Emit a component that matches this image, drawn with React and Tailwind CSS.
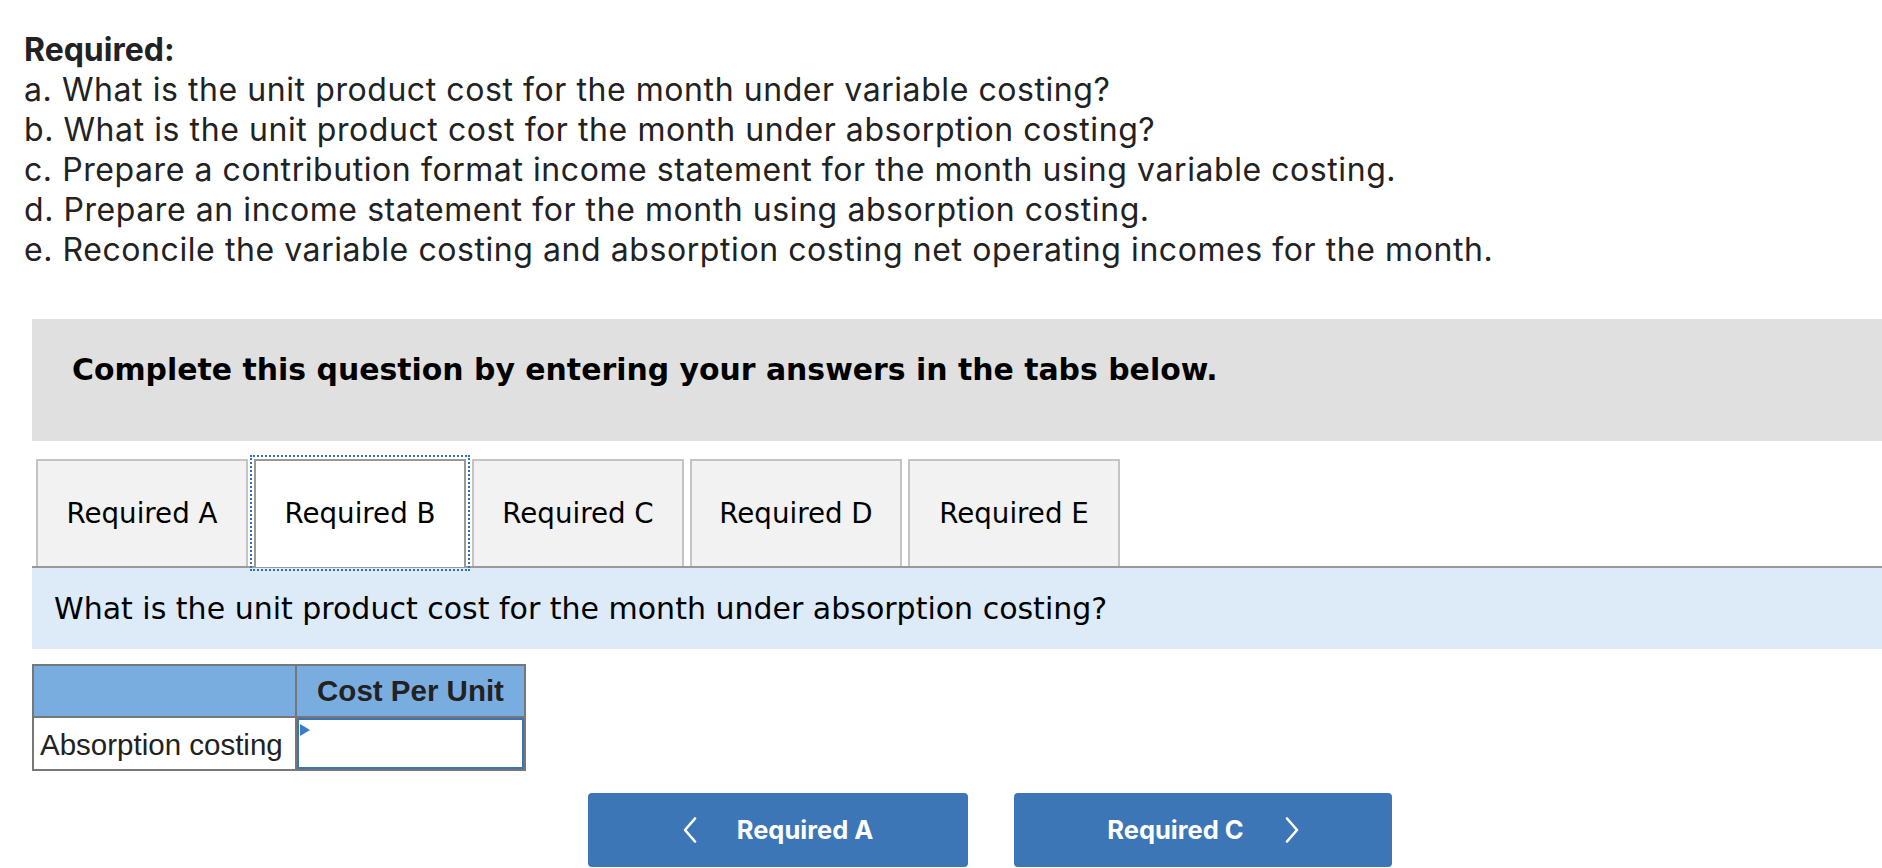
import React from "react";

const tabs = ["Required A", "Required B", "Required C", "Required D", "Required E"];

function ChevronLeft() {
  return (
    <svg width="14" height="26" viewBox="0 0 14 26" fill="none" stroke="white" strokeWidth="2.6" strokeLinecap="round" strokeLinejoin="round">
      <polyline points="12,1.5 2,13 12,24.5" />
    </svg>
  );
}

function ChevronRight() {
  return (
    <svg width="14" height="26" viewBox="0 0 14 26" fill="none" stroke="white" strokeWidth="2.6" strokeLinecap="round" strokeLinejoin="round">
      <polyline points="2,1.5 12,13 2,24.5" />
    </svg>
  );
}

export default function App() {
  return (
    <div className="w-full h-[868px] overflow-hidden bg-white">
      {/* Required list */}
      <div className="pt-[30px] pl-[24px] font-['Inter',sans-serif] text-[32px] leading-[40px] text-[#222]">
        <div className="font-bold">Required:</div>
        <div className="tracking-[0.57px]">
          <div>a. What is the unit product cost for the month under variable costing?</div>
          <div>b. What is the unit product cost for the month under absorption costing?</div>
          <div>c. Prepare a contribution format income statement for the month using variable costing.</div>
          <div>d. Prepare an income statement for the month using absorption costing.</div>
          <div>e. Reconcile the variable costing and absorption costing net operating incomes for the month.</div>
        </div>
      </div>

      <div className="pl-[32px]">
        {/* Gray instruction box */}
        <div className="mt-[49px] h-[122px] bg-[#e0e0e0] pt-[29px] pl-[40px]">
          <div className="font-['DejaVu_Sans',sans-serif] font-bold text-[29.9px] text-black leading-normal">
            Complete this question by entering your answers in the tabs below.
          </div>
        </div>

        {/* Tabs */}
        <div className="mt-[18px] flex gap-[6px] pl-[4px] h-[107px] items-end">
          {tabs.map((t, i) =>
            i === 1 ? (
              <div
                key={t}
                className="w-[212px] h-[108px] relative z-10 -mb-[1px] bg-white border-2 border-b-0 border-[#999] outline-2 outline-dotted outline-[#2f6fc0] outline-offset-2 flex items-center justify-center font-['DejaVu_Sans',sans-serif] text-[27.7px] text-black"
              >
                {t}
              </div>
            ) : (
              <div
                key={t}
                className="w-[212px] h-[107px] bg-[#f2f2f2] border-2 border-b-0 border-[#c4c4c4] flex items-center justify-center font-['DejaVu_Sans',sans-serif] text-[27.7px] text-black"
              >
                {t}
              </div>
            )
          )}
        </div>
        <div className="h-[2px] bg-[#999]" />

        {/* Question band */}
        <div className="h-[81px] bg-[#dcebf7] flex items-center pl-[22px] font-['DejaVu_Sans',sans-serif] text-[30px] text-black">
          What is the unit product cost for the month under absorption costing?
        </div>

        {/* Table */}
        <div className="mt-[15px] w-[494px] border-2 border-[#777] font-['Liberation_Sans',Arial,sans-serif] text-[29.5px] text-[#222]">
          <div className="flex h-[52px] bg-[#7aaddf] border-b-2 border-[#777]">
            <div className="w-[263px] border-r-2 border-[#777]" />
            <div className="flex-1 flex items-center justify-center font-bold">Cost Per Unit</div>
          </div>
          <div className="flex h-[51px]">
            <div className="w-[263px] border-r-2 border-[#777] flex items-center pl-[6px] pt-[3px]">Absorption costing</div>
            <div className="flex-1 relative border-2 border-[#3b73b4] bg-white">
              <div className="absolute left-[1px] top-[4px] w-0 h-0 border-y-[6px] border-y-transparent border-l-[10px] border-l-[#3b7bc8]" />
            </div>
          </div>
        </div>
      </div>

      {/* Nav buttons */}
      <div className="mt-[22px] pl-[588px] flex gap-[46px] font-['Inter',sans-serif] font-bold text-[25.5px] text-white">
        <div className="w-[380px] h-[74px] rounded-[4px] bg-[#3d76b6] flex items-center justify-center gap-[40px]">
          <ChevronLeft />
          <span>Required A</span>
        </div>
        <div className="w-[378px] h-[74px] rounded-[4px] bg-[#3d76b6] flex items-center justify-center gap-[41px]">
          <span>Required C</span>
          <ChevronRight />
        </div>
      </div>
    </div>
  );
}
